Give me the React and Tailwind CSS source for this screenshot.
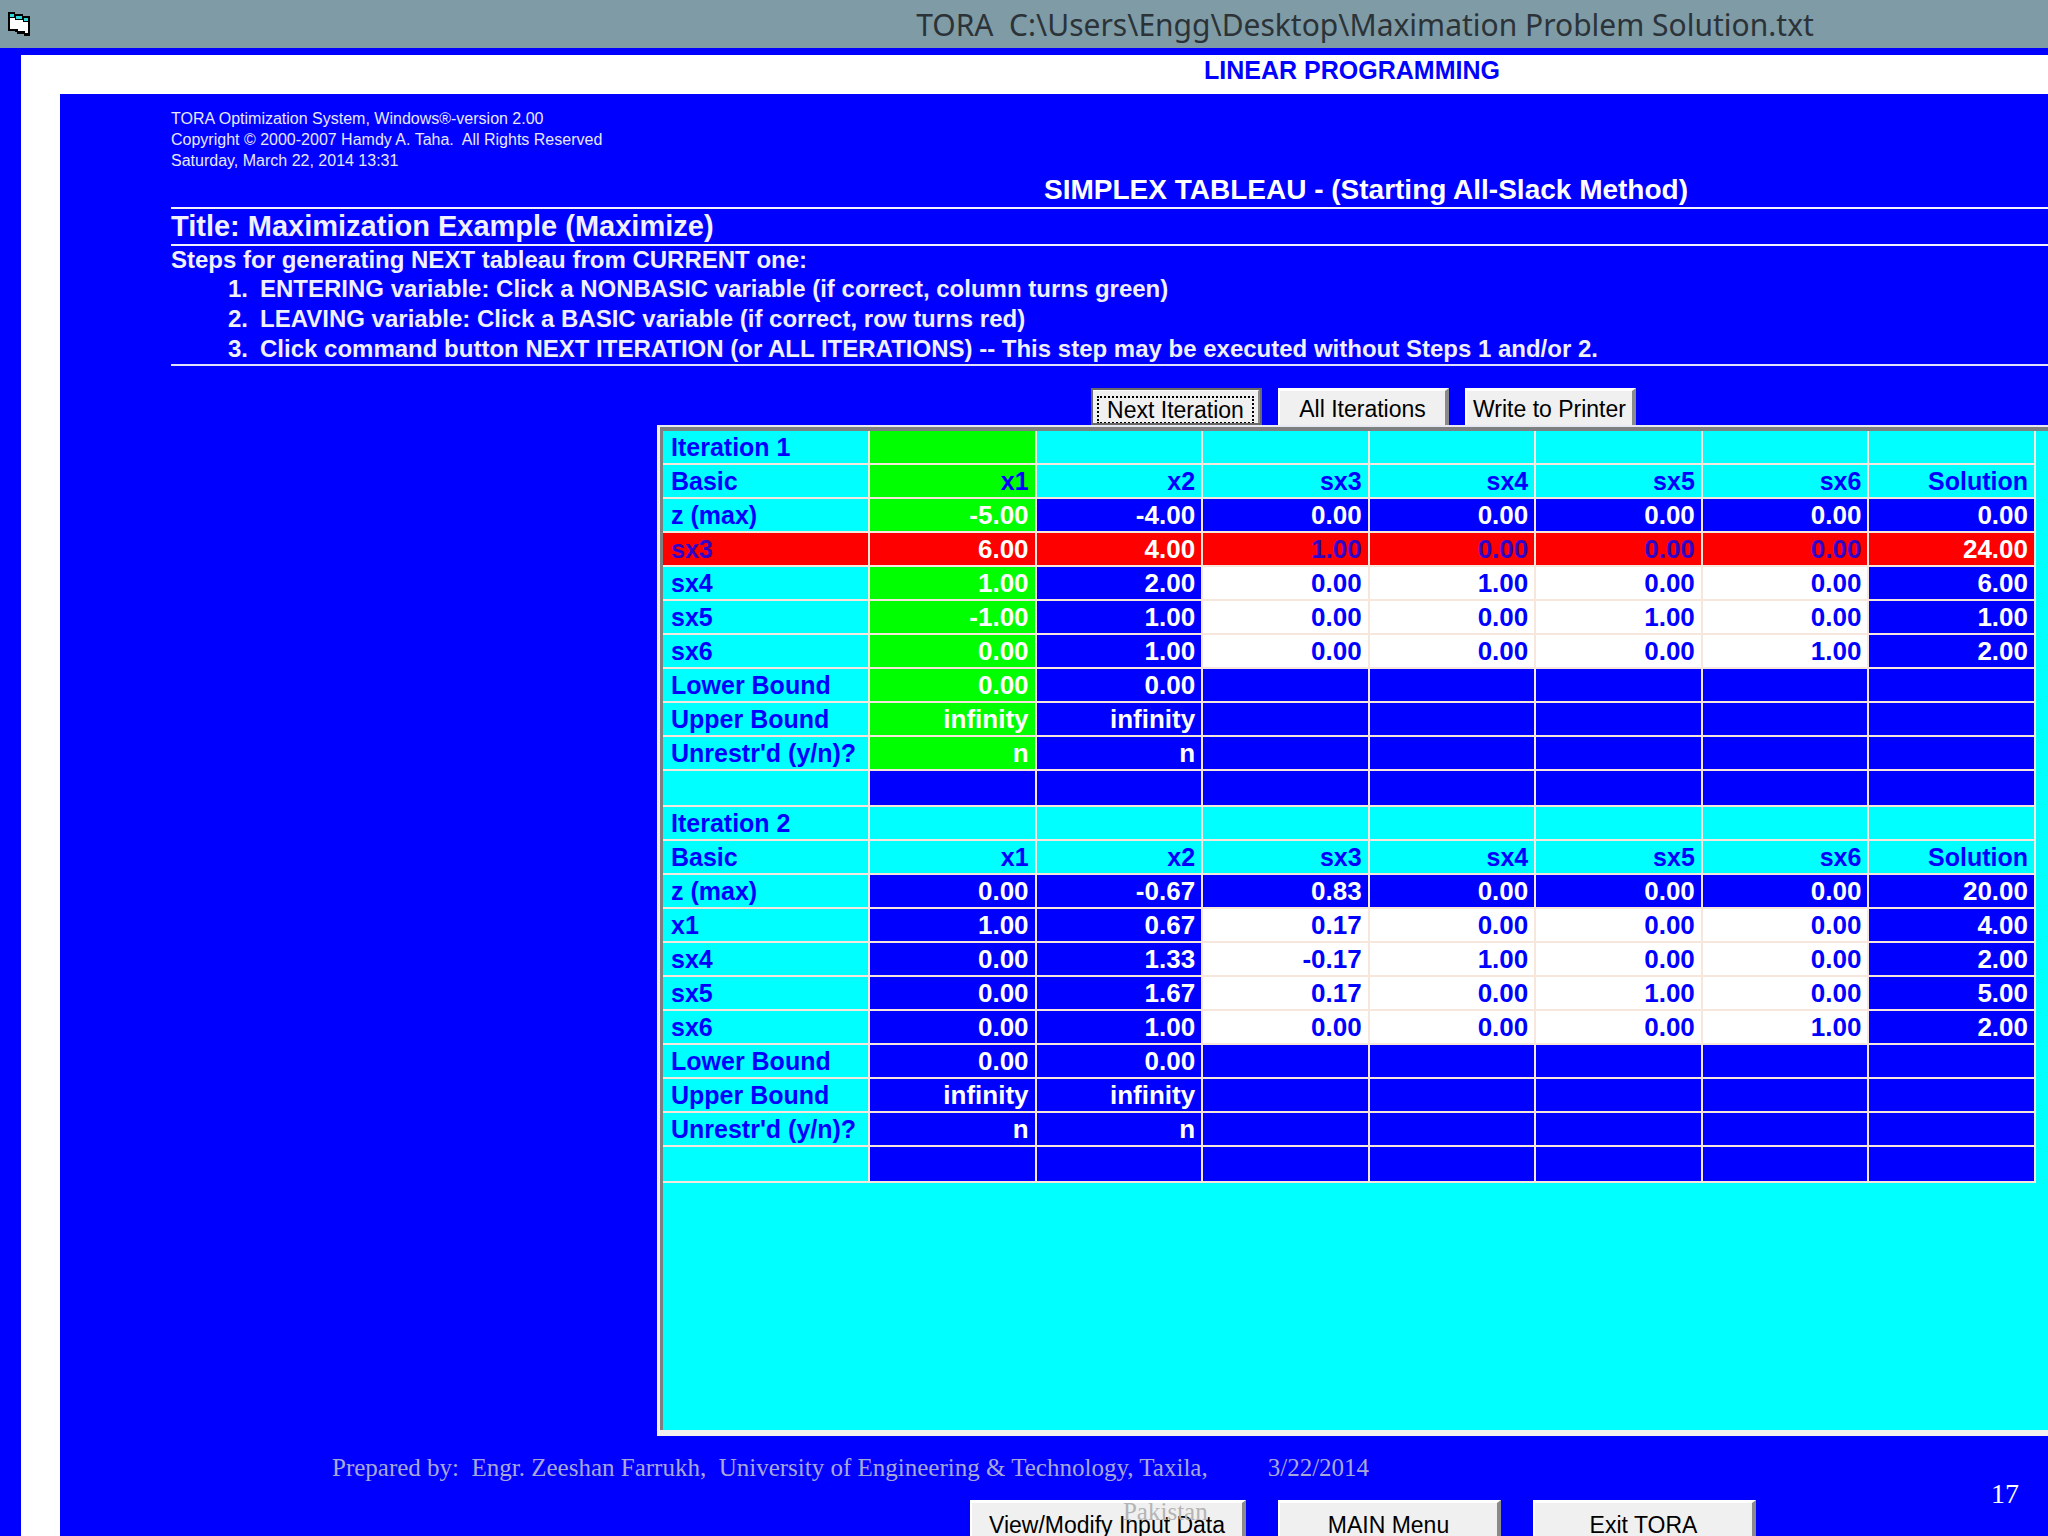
const COLUMNS = ["x1", "x2", "sx3", "sx4", "sx5", "sx6", "Solution"];
const BOUNDS = [
  ["Lower Bound", "0.00", "0.00", "", "", "", "", ""],
  ["Upper Bound", "infinity", "infinity", "", "", "", "", ""],
  ["Unrestr'd (y/n)?", "n", "n", "", "", "", "", ""],
];

const ITERATIONS = [
  {
    name: "Iteration 1",
    entering: "x1",
    leaving: "sx3",
    rows: [
      ["z (max)", "-5.00", "-4.00", "0.00", "0.00", "0.00", "0.00", "0.00"],
      ["sx3", "6.00", "4.00", "1.00", "0.00", "0.00", "0.00", "24.00"],
      ["sx4", "1.00", "2.00", "0.00", "1.00", "0.00", "0.00", "6.00"],
      ["sx5", "-1.00", "1.00", "0.00", "0.00", "1.00", "0.00", "1.00"],
      ["sx6", "0.00", "1.00", "0.00", "0.00", "0.00", "1.00", "2.00"],
    ],
  },
  {
    name: "Iteration 2",
    entering: null,
    leaving: null,
    rows: [
      ["z (max)", "0.00", "-0.67", "0.83", "0.00", "0.00", "0.00", "20.00"],
      ["x1", "1.00", "0.67", "0.17", "0.00", "0.00", "0.00", "4.00"],
      ["sx4", "0.00", "1.33", "-0.17", "1.00", "0.00", "0.00", "2.00"],
      ["sx5", "0.00", "1.67", "0.17", "0.00", "1.00", "0.00", "5.00"],
      ["sx6", "0.00", "1.00", "0.00", "0.00", "0.00", "1.00", "2.00"],
    ],
  },
];

const STEPS = [
  "ENTERING variable: Click a NONBASIC variable (if correct, column turns green)",
  "LEAVING variable: Click a BASIC variable (if correct, row turns red)",
  "Click command button NEXT ITERATION (or ALL ITERATIONS) -- This step may be executed without Steps 1 and/or 2.",
];

const LINE = "border-r-2 border-b-2 border-[#f6e6dc]";
const LABEL = `${LINE} h-[34px] p-0 pl-2 text-left text-[25px] leading-8 font-bold whitespace-nowrap`;
const HEAD = `${LINE} p-0 pr-1.5 text-right text-[25px] leading-8 font-bold text-[#0000ff]`;
const VALUE = `${LINE} p-0 pr-1.5 text-right text-[26px] leading-8 font-bold`;

function valueColors(iteration, row, column, isConstraint) {
  const slack = column.startsWith("sx");
  if (iteration.leaving && row[0] === iteration.leaving) {
    return slack ? "bg-[#ff0000] text-[#3200c8]" : "bg-[#ff0000] text-white";
  }
  if (column === iteration.entering) return "bg-[#00ff00] text-white";
  if (slack && isConstraint) return "bg-white text-[#0000ff]";
  return "bg-[#0000ff] text-white";
}

function IterationRows({ iteration }) {
  const body = [...iteration.rows, ...BOUNDS];
  return (
    <tbody>
      <tr className="bg-[#00ffff]">
        <th scope="row" className={`${LABEL} text-[#0000ff]`}>{iteration.name}</th>
        {COLUMNS.map((c) => (
          <td key={c} className={`${LINE} ${c === iteration.entering ? "bg-[#00ff00]" : ""}`} />
        ))}
      </tr>
      <tr className="bg-[#00ffff]">
        <th scope="col" className={`${LABEL} text-[#0000ff]`}>Basic</th>
        {COLUMNS.map((c) => (
          <th key={c} scope="col" className={`${HEAD} ${c === iteration.entering ? "bg-[#00ff00]" : ""}`}>
            {c}
          </th>
        ))}
      </tr>
      {body.map((row, r) => (
        <tr key={row[0]}>
          <th
            scope="row"
            className={`${LABEL} ${
              row[0] === iteration.leaving ? "bg-[#ff0000] text-[#3200c8]" : "bg-[#00ffff] text-[#0000ff]"
            }`}
          >
            {row[0]}
          </th>
          {COLUMNS.map((c, i) => (
            <td
              key={c}
              className={`${VALUE} ${valueColors(iteration, row, c, r > 0 && r < iteration.rows.length)}`}
            >
              {row[i + 1]}
            </td>
          ))}
        </tr>
      ))}
      <tr className="bg-[#0000ff]">
        <td className={`${LINE} h-9 bg-[#00ffff]`} />
        {COLUMNS.map((c) => (
          <td key={c} className={LINE} />
        ))}
      </tr>
    </tbody>
  );
}

function CommandButton({ children, size, focused = false }) {
  return (
    <button
      type="button"
      className={`${size} flex shrink-0 justify-center border-t-3 border-r-4 border-l-2 border-t-white border-r-[#8a8a8a] border-l-white bg-[#f0f0f0] text-[23px] leading-8 whitespace-nowrap text-black ${
        focused ? "items-center outline-2 -outline-offset-2 outline-[#696969]" : "items-start"
      }`}
    >
      <span className={focused ? "mt-1 border-2 border-dotted border-black px-2 leading-6" : ""}>{children}</span>
    </button>
  );
}

function FormIcon() {
  return (
    <svg viewBox="0 0 22 24" className="h-6 w-[22px]" aria-hidden="true" shapeRendering="crispEdges">
      <path d="M0 0h7v2h8v2h7v20h-6v-2H9v-2H7v-1H0z" fill="#000" />
      <path d="M2 6h5v2h8v2h5v11h-3v-2h-7v-2H2z" fill="#fff" />
      <path d="M2 2h4v3H2zM8 4h6v3H8zM16 6h4v3h-4z" fill="#2ed8d8" />
    </svg>
  );
}

export default function App() {
  return (
    <div className="relative flex h-screen flex-col overflow-hidden bg-[#0000ff] font-['Liberation_Sans',Arial,sans-serif] text-white">
      <header className="flex h-12 shrink-0 items-center bg-[#7f9ba6] pl-2">
        <FormIcon />
        <h1 className="flex-1 pt-0.5 pl-[652px] text-center font-['Noto_Sans','Open_Sans',sans-serif] text-[30px] leading-10 whitespace-pre text-[#2b3338]">
          {"TORA  C:\\Users\\Engg\\Desktop\\Maximation Problem Solution.txt"}
        </h1>
      </header>

      <main className="mt-[7px] ml-[21px] flex min-h-0 flex-1 flex-col border-l-[39px] border-white">
        <h2 className="h-[39px] shrink-0 bg-white pl-[596px] text-center text-[25px] leading-[30px] font-bold text-[#0000ff]">
          LINEAR PROGRAMMING
        </h2>

        <section className="shrink-0 pt-3.5 pl-[111px]">
          <div className="text-base leading-[21px] whitespace-pre text-[#e8e8ff]">
            <p>TORA Optimization System, Windows®-version 2.00</p>
            <p>{"Copyright © 2000-2007 Hamdy A. Taha.  All Rights Reserved"}</p>
            <p>Saturday, March 22, 2014 13:31</p>
          </div>
          <h3 className="mt-0.5 border-b-2 border-[#f0f0ff] pl-[513px] text-center text-[28px] leading-[34px] font-bold">
            SIMPLEX TABLEAU - (Starting All-Slack Method)
          </h3>
          <p className="border-b-2 border-[#f0f0ff] text-[29px] leading-[35px] font-bold text-[#f0f0ff]">
            Title: Maximization Example (Maximize)
          </p>
          <div className="border-b-2 border-[#e0e0ff] text-2xl leading-[30px] font-bold text-[#f0f0ff]">
            <p className="leading-7">Steps for generating NEXT tableau from CURRENT one:</p>
            <ol className="pl-[57px]">
              {STEPS.map((step, i) => (
                <li key={step} className="flex gap-3 whitespace-nowrap">
                  <span>{i + 1}.</span>
                  <span>{step}</span>
                </li>
              ))}
            </ol>
          </div>
        </section>

        <nav aria-label="Iterations" className="mt-[22px] flex h-[37px] shrink-0 gap-4 pl-[1031px]">
          <CommandButton size="w-[171px]" focused>Next Iteration</CommandButton>
          <CommandButton size="w-[171px] pt-0.5">All Iterations</CommandButton>
          <CommandButton size="w-[171px] pt-0.5">Write to Printer</CommandButton>
        </nav>

        <section className="ml-[597px] min-h-0 flex-1 border-t-2 border-b-6 border-l-3 border-t-[#e8e8f0] border-b-[#f4f0f0] border-l-[#f4f0f0]">
          <div className="h-full border-t-4 border-l-3 border-[#7c8080] bg-[#00ffff] pr-3">
            <table className="w-full table-fixed border-separate border-spacing-0">
              <colgroup>
                <col className="w-[207px]" />
                {COLUMNS.map((c) => (
                  <col key={c} />
                ))}
              </colgroup>
              {ITERATIONS.map((iteration) => (
                <IterationRows key={iteration.name} iteration={iteration} />
              ))}
            </table>
          </div>
        </section>

        <nav aria-label="Program" className="mt-16 flex h-9 shrink-0 items-start gap-8 pl-[910px]">
          <CommandButton size="h-14 w-[276px] pt-1.5">View/Modify Input Data</CommandButton>
          <CommandButton size="h-14 w-[223px] pt-1.5">MAIN Menu</CommandButton>
          <CommandButton size="h-14 w-[223px] pt-1.5">Exit TORA</CommandButton>
        </nav>
      </main>

      <footer className="pointer-events-none absolute right-0 bottom-0 left-0 flex h-[90px] items-start pr-[29px] pl-[332px] font-['Liberation_Serif','Times_New_Roman',serif] text-[#a8a8d8]">
        <p className="text-right text-[25px] leading-[44px] whitespace-pre">
          {"Prepared by:  Engr. Zeeshan Farrukh,  University of Engineering & Technology, Taxila,"}
          <br />
          <span className="text-[#b4b4b4]">Pakistan</span>
        </p>
        <p className="ml-15 text-[25px] leading-[44px]">3/22/2014</p>
        <p className="mt-8 ml-auto text-[28px] leading-8 text-white">17</p>
      </footer>
    </div>
  );
}
